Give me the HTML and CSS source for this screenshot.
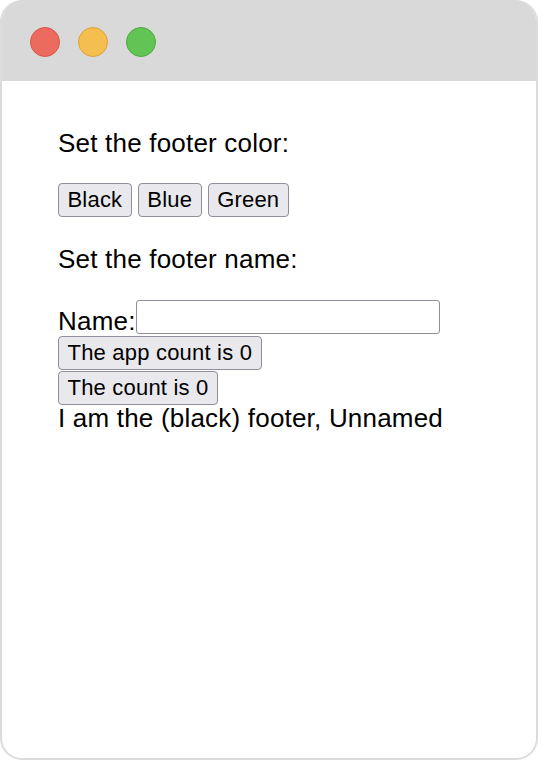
FILE: index.html
```html
<!DOCTYPE html>
<html>
<head>
<meta charset="utf-8">
<link rel="stylesheet" href="styles.css">
</head>
<body>
<div class="window">
  <div class="titlebar">
    <span class="dot red"></span>
    <span class="dot yellow"></span>
    <span class="dot green"></span>
  </div>
  <div class="content">
    <p class="line first">Set the footer color:</p>
    <div class="btn-row">
      <button class="btn">Black</button>
      <button class="btn">Blue</button>
      <button class="btn">Green</button>
    </div>
    <p class="line second">Set the footer name:</p>
    <div class="name-row"><label class="label">Name:</label><input class="field" type="text"></div>
    <div class="stack">
      <button class="btn">The app count is 0</button>
      <button class="btn">The count is 0</button>
    </div>
    <div class="footer-text">I am the (black) footer, Unnamed</div>
  </div>
</div>
</body>
</html>
```

FILE: styles.css
```css
html, body {
  margin: 0;
  padding: 0;
  background: #ffffff;
}
body {
  width: 538px;
  height: 760px;
  font-family: "Liberation Sans", Arial, sans-serif;
  color: #000;
}
.window {
  box-sizing: border-box;
  width: 538px;
  height: 760px;
  border: 2px solid #dcdcdc;
  border-top: none;
  border-radius: 22px;
  overflow: hidden;
  background: #fff;
  display: flex;
  flex-direction: column;
}
.titlebar {
  height: 81px;
  box-sizing: border-box;
  background: #d9d9d9;
  display: flex;
  align-items: flex-start;
  gap: 18px;
  padding: 27px 0 0 30px;
  flex-shrink: 0;
  margin: 0 -2px;
}
.dot {
  width: 28px;
  height: 28px;
  border-radius: 50%;
  display: block;
}
.red { background: #ec6a5e; border: 1px solid #d6564b; }
.yellow { background: #f4bf4f; border: 1px solid #dea23a; }
.green { background: #61c454; border: 1px solid #4ea93f; }
.content {
  padding: 47px 0 0 56px;
  font-size: 26px;
  line-height: 30px;
  letter-spacing: 0.2px;
}
.line {
  margin: 0;
}
.btn-row {
  margin-top: 25px;
  display: flex;
  gap: 6px;
}
.second {
  margin-top: 27px;
}
.btn {
  font-family: "Liberation Sans", Arial, sans-serif;
  font-size: 22px;
  line-height: 26px;
  letter-spacing: 0.2px;
  padding: 3px 8.5px;
  background: #e9e9ed;
  border: 1px solid #8f8f9d;
  border-radius: 4px;
  color: #000;
  height: 34px;
  box-sizing: border-box;
}
.name-row {
  margin-top: 26px;
  display: flex;
  align-items: flex-start;
}
.label {
  display: block;
  padding-top: 6px;
  line-height: 30px;
}
.field {
  width: 304px;
  height: 34px;
  box-sizing: border-box;
  border: 1px solid #8f8f9d;
  border-radius: 3px;
  padding: 0 6px;
  margin: 0;
  font-size: 20px;
  background: #fff;
}
.stack {
  display: flex;
  flex-direction: column;
  align-items: flex-start;
  gap: 1px;
}
.footer-text {
  line-height: 26px;
}
```
